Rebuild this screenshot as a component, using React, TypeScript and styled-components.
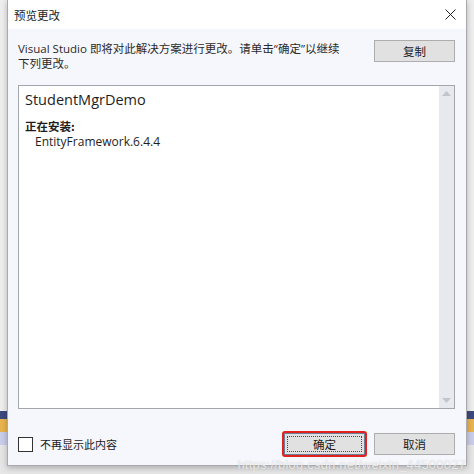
import styled, { createGlobalStyle } from "styled-components";

const GlobalStyle = createGlobalStyle`
  html, body {
    margin: 0;
    padding: 0;
  }
  body {
    width: 474px;
    height: 474px;
    overflow: hidden;
    font-family: "Open Sans", "Noto Sans CJK SC", sans-serif;
  }
`;

const Backdrop = styled.div`
  position: relative;
  width: 474px;
  height: 474px;
  display: flex;
  align-items: flex-start;
  padding-left: 7px;
  box-sizing: border-box;
  background: linear-gradient(
    to bottom,
    #eeeeee 0px,
    #eeeeee 411px,
    #3d4a7e 411px,
    #3d4a7e 419px,
    #e8b450 419px,
    #e8b450 432px,
    #c9cde9 432px,
    #c9cde9 445px,
    #e6e6e6 445px
  );
`;

const Dialog = styled.div`
  position: relative;
  width: 460px;
  height: 466px;
  display: flex;
  flex-direction: column;
  background: #f6f7fc;
  border: 1px solid #a9a9ae;
  border-top: none;
  box-sizing: border-box;
  box-shadow: 0 2px 6px rgba(0, 0, 0, 0.25);
`;

const TitleBar = styled.div`
  height: 29px;
  flex: none;
  display: flex;
  align-items: center;
  justify-content: space-between;
  padding: 0 8px 0 6px;
  background: #ffffff;
  font-family: "Noto Sans CJK SC", sans-serif;
  font-size: 11.5px;
  color: #1a1a1a;
`;

const CloseIcon = styled.svg`
  width: 11px;
  height: 11px;
  margin-right: 2px;
`;

const Body = styled.div`
  flex: 1;
  display: flex;
  flex-direction: column;
  padding: 11px 11px 10px 10px;
`;

const TopRow = styled.div`
  display: flex;
  justify-content: space-between;
  align-items: flex-start;
`;

const Message = styled.div`
  margin-top: 1px;
  font-size: 11.5px;
  line-height: 15px;
  color: #2a2a2a;
`;

const Button = styled.button<{ $focused?: boolean }>`
  position: relative;
  width: 81px;
  height: 22px;
  padding: 0;
  border: 1px solid ${(p) => (p.$focused ? "#6d7f96" : "#adadad")};
  background: #e1e1e1;
  font-family: "Noto Sans CJK SC", sans-serif;
  font-size: 11.5px;
  color: #1a1a1a;
  display: flex;
  align-items: center;
  justify-content: center;
`;

const FocusRing = styled.span`
  position: absolute;
  inset: 2px;
  border: 1px dotted #4a4a4a;
`;

const Highlight = styled.span`
  position: absolute;
  inset: -3px;
  border: 2px solid #e3211f;
  border-radius: 3px;
  pointer-events: none;
`;

const ListBox = styled.div`
  margin-top: 14px;
  height: 324px;
  display: flex;
  border: 1px solid #a4a6ad;
  background: #ffffff;
  box-sizing: border-box;
`;

const ListContent = styled.div`
  flex: 1;
  padding: 3px 6px;
  color: #1e1e1e;
`;

const Project = styled.div`
  font-size: 14.5px;
  line-height: 22px;
`;

const Heading = styled.div`
  margin-top: 7px;
  font-family: "Noto Sans CJK SC", sans-serif;
  font-weight: 700;
  font-size: 11.5px;
  line-height: 16px;
`;

const Package = styled.div`
  padding-left: 10px;
  font-size: 12px;
  line-height: 16px;
`;

const ScrollBar = styled.div`
  width: 15px;
  flex: none;
  display: flex;
  flex-direction: column;
  justify-content: space-between;
  align-items: center;
  padding: 5px 0;
  background: #e8e9ee;
`;

const Arrow = styled.svg`
  width: 9px;
  height: 5px;
`;

const BottomRow = styled.div`
  margin-top: auto;
  display: flex;
  align-items: center;
  gap: 9px;
`;

const CheckLabel = styled.label`
  display: flex;
  align-items: center;
  gap: 7px;
  margin-right: auto;
  font-family: "Noto Sans CJK SC", sans-serif;
  font-size: 11px;
  color: #1a1a1a;
`;

const CheckBox = styled.span`
  width: 13px;
  height: 13px;
  border: 1px solid #333333;
  background: #ffffff;
`;

const Watermark = styled.div`
  position: absolute;
  right: 0;
  bottom: -7px;
  font-family: "Liberation Sans", sans-serif;
  font-size: 13px;
  color: rgba(255, 255, 255, 0.7);
  text-shadow: 0 0 1px rgba(150, 150, 150, 0.5);
  letter-spacing: 0.2px;
  pointer-events: none;
`;

export default function App() {
  return (
    <>
      <GlobalStyle />
      <Backdrop>
        <Dialog>
          <TitleBar>
            <span>预览更改</span>
            <CloseIcon viewBox="0 0 11 11">
              <path d="M0.5 0.5 L10.5 10.5 M10.5 0.5 L0.5 10.5" stroke="#222" strokeWidth="1" />
            </CloseIcon>
          </TitleBar>
          <Body>
            <TopRow>
              <Message>
                Visual Studio 即将对此解决方案进行更改。请单击“确定”以继续
                <br />
                下列更改。
              </Message>
              <Button>复制</Button>
            </TopRow>
            <ListBox>
              <ListContent>
                <Project>StudentMgrDemo</Project>
                <Heading>正在安装:</Heading>
                <Package>EntityFramework.6.4.4</Package>
              </ListContent>
              <ScrollBar>
                <Arrow viewBox="0 0 9 5">
                  <path d="M0 5 L4.5 0 L9 5 Z" fill="#c3c5cc" />
                </Arrow>
                <Arrow viewBox="0 0 9 5">
                  <path d="M0 0 L4.5 5 L9 0 Z" fill="#c3c5cc" />
                </Arrow>
              </ScrollBar>
            </ListBox>
            <BottomRow>
              <CheckLabel>
                <CheckBox />
                不再显示此内容
              </CheckLabel>
              <Button $focused>
                <FocusRing />
                确定
                <Highlight />
              </Button>
              <Button>取消</Button>
            </BottomRow>
          </Body>
          <Watermark>https://blog.csdn.net/weixin_44500027</Watermark>
        </Dialog>
      </Backdrop>
    </>
  );
}
